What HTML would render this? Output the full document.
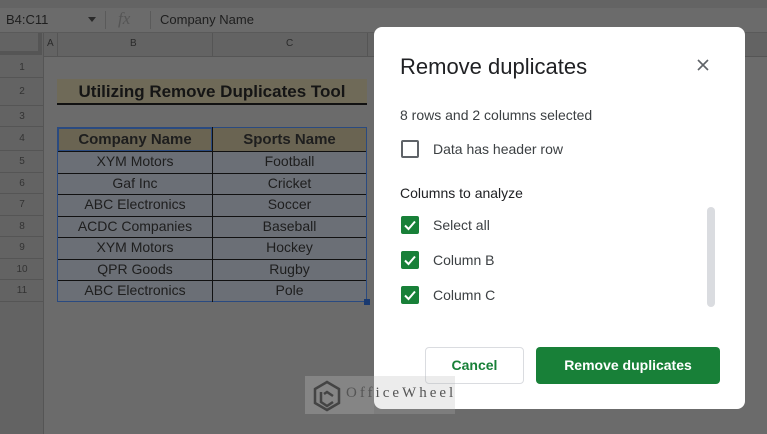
<!DOCTYPE html>
<html><head><style>
*{margin:0;padding:0;box-sizing:border-box}
body{width:767px;height:434px;overflow:hidden;background:#6b6b6b;font-family:"Liberation Sans",Arial,sans-serif;position:relative}
.abs{position:absolute}
.rn{position:absolute;left:0;width:44px;border-bottom:1px solid #555;font-size:10px;color:#333;text-align:center}
.c{position:absolute;text-align:center;font-size:14px;color:#1e1e1e;height:21px;line-height:21px}
.b{left:57px;width:156px}.cc{left:212px;width:155px}
.hl{position:absolute;left:58px;width:308px;height:1px;background:#111}
.cb{position:absolute;left:401px;width:18px;height:18px;background:#188038;border-radius:2px}
.cl{position:absolute;left:433px;font-size:14px;color:#3c4043}
</style></head><body>
<div class="abs" style="left:0;top:0;width:767px;height:8px;background:#646464"></div>
<div class="abs" style="left:0;top:8px;width:767px;height:25px;background:#6b6b6b;border-bottom:1px solid #5a5a5a"></div>
<div class="abs" style="left:6px;top:12px;font-size:13px;color:#1e1e1e">B4:C11</div>
<div class="abs" style="left:88px;top:17px;border:4px solid transparent;border-top:5px solid #2a2a2a"></div>
<div class="abs" style="left:105px;top:11px;width:1px;height:18px;background:#5a5a5a"></div>
<div class="abs" style="left:118px;top:9px;font-size:17px;font-style:italic;color:#555;font-family:'Liberation Serif',serif">fx</div>
<div class="abs" style="left:150px;top:11px;width:1px;height:18px;background:#5a5a5a"></div>
<div class="abs" style="left:160px;top:12px;font-size:13px;color:#1e1e1e">Company Name</div>
<div class="abs" style="left:0;top:33px;width:767px;height:24px;background:#636363;border-bottom:1px solid #555"></div>
<div class="abs" style="left:0;top:33px;width:44px;height:401px;background:#636363;border-right:1px solid #555"></div>
<div class="abs" style="left:0;top:33px;width:42px;height:22px;border-right:4px solid #555;border-bottom:4px solid #555"></div>
<div class="abs" style="left:47px;top:38px;font-size:10px;color:#2a2a2a">A</div>
<div class="abs" style="left:57px;top:33px;width:1px;height:24px;background:#555"></div>
<div class="abs" style="left:130px;top:38px;font-size:10px;color:#2a2a2a">B</div>
<div class="abs" style="left:212px;top:33px;width:1px;height:24px;background:#555"></div>
<div class="abs" style="left:286px;top:38px;font-size:10px;color:#2a2a2a">C</div>
<div class="abs" style="left:367px;top:33px;width:1px;height:24px;background:#555"></div>

<div class="rn" style="top:57px;height:21px;line-height:21px">1</div>
<div class="rn" style="top:78px;height:28px;line-height:28px">2</div>
<div class="rn" style="top:106px;height:21px;line-height:21px">3</div>
<div class="rn" style="top:127px;height:24px;line-height:24px">4</div>
<div class="rn" style="top:151px;height:22px;line-height:22px">5</div>
<div class="rn" style="top:173px;height:21px;line-height:21px">6</div>
<div class="rn" style="top:194px;height:22px;line-height:22px">7</div>
<div class="rn" style="top:216px;height:21px;line-height:21px">8</div>
<div class="rn" style="top:237px;height:22px;line-height:22px">9</div>
<div class="rn" style="top:259px;height:21px;line-height:21px">10</div>
<div class="rn" style="top:280px;height:22px;line-height:22px">11</div>

<div class="abs" style="left:57px;top:79px;width:310px;height:26px;background:#6f6a58;border-bottom:2px solid #111"></div>
<div class="abs" style="left:57px;top:82px;width:310px;text-align:center;font-weight:bold;font-size:17px;color:#151515">Utilizing Remove Duplicates Tool</div>
<div class="abs" style="left:57px;top:127px;width:310px;height:175px;border:1px solid #2a4a80;background:#6b6f76"></div>
<div class="abs" style="left:58px;top:128px;width:308px;height:23px;background:#6a6452"></div>
<div class="abs" style="left:57px;top:127px;width:156px;height:25px;border:2px solid #2a4a80"></div>
<div class="abs" style="left:212px;top:127px;width:1px;height:175px;background:#111"></div>
<div class="hl" style="top:151px"></div><div class="hl" style="top:173px"></div><div class="hl" style="top:194px"></div><div class="hl" style="top:216px"></div><div class="hl" style="top:237px"></div><div class="hl" style="top:259px"></div><div class="hl" style="top:280px"></div>

<div class="c b" style="top:128px;height:23px;line-height:23px;font-weight:bold;font-size:15px">Company Name</div>
<div class="c cc" style="top:128px;height:23px;line-height:23px;font-weight:bold;font-size:15px">Sports Name</div>
<div class="c b" style="top:151px">XYM Motors</div><div class="c cc" style="top:151px">Football</div>
<div class="c b" style="top:173px">Gaf Inc</div><div class="c cc" style="top:173px">Cricket</div>
<div class="c b" style="top:194px">ABC Electronics</div><div class="c cc" style="top:194px">Soccer</div>
<div class="c b" style="top:216px">ACDC Companies</div><div class="c cc" style="top:216px">Baseball</div>
<div class="c b" style="top:237px">XYM Motors</div><div class="c cc" style="top:237px">Hockey</div>
<div class="c b" style="top:259px">QPR Goods</div><div class="c cc" style="top:259px">Rugby</div>
<div class="c b" style="top:280px">ABC Electronics</div><div class="c cc" style="top:280px">Pole</div>
<div class="abs" style="left:364px;top:299px;width:6px;height:6px;background:#1a3a70"></div>

<div class="abs" style="left:374px;top:27px;width:371px;height:382px;background:#fff;border-radius:8px"></div>
<div class="abs" style="left:400px;top:54px;font-size:22px;color:#202124">Remove duplicates</div>
<svg class="abs" style="left:697px;top:59px" width="12" height="12" viewBox="0 0 12 12"><path d="M1 1L11 11M11 1L1 11" stroke="#5f6368" stroke-width="1.6"/></svg>
<div class="abs" style="left:400px;top:107px;font-size:14px;color:#3c4043">8 rows and 2 columns selected</div>
<div class="abs" style="left:401px;top:140px;width:18px;height:18px;border:2px solid #5f6368;border-radius:2px"></div>
<div class="cl" style="top:141px">Data has header row</div>
<div class="abs" style="left:400px;top:185px;font-size:14px;color:#202124">Columns to analyze</div>
<div class="abs" style="left:707px;top:207px;width:8px;height:100px;background:#dadce0;border-radius:4px"></div>
<div class="cb" style="top:216px"><svg width="18" height="18" viewBox="0 0 18 18"><path d="M4 9.5 L7.5 13 L14 5.5" fill="none" stroke="#fff" stroke-width="2"/></svg></div>
<div class="cl" style="top:217px">Select all</div>
<div class="cb" style="top:251px"><svg width="18" height="18" viewBox="0 0 18 18"><path d="M4 9.5 L7.5 13 L14 5.5" fill="none" stroke="#fff" stroke-width="2"/></svg></div>
<div class="cl" style="top:252px">Column B</div>
<div class="cb" style="top:286px"><svg width="18" height="18" viewBox="0 0 18 18"><path d="M4 9.5 L7.5 13 L14 5.5" fill="none" stroke="#fff" stroke-width="2"/></svg></div>
<div class="cl" style="top:287px">Column C</div>
<div class="abs" style="left:425px;top:347px;width:99px;height:37px;border:1px solid #dadce0;border-radius:4px;text-align:center;line-height:35px;font-size:14px;color:#188038;font-weight:bold">Cancel</div>
<div class="abs" style="left:536px;top:347px;width:184px;height:37px;background:#188038;border-radius:4px;text-align:center;line-height:37px;font-size:14px;color:#fff;font-weight:bold">Remove duplicates</div>

<div class="abs" style="left:305px;top:376px;width:69px;height:38px;background:#858585"></div>
<div class="abs" style="left:374px;top:376px;width:81px;height:38px;background:rgba(180,180,180,0.25)"></div>
<svg class="abs" style="left:312px;top:380px" width="30" height="32" viewBox="0 0 30 32"><path d="M15 2 L27 9 V23 L15 30 L3 23 V9 Z M9 12 V22 L15 26 L21 22 M21 16 L15 12 L12 14" fill="none" stroke="#444" stroke-width="2.5"/></svg>
<div class="abs" style="left:346px;top:385px;font-size:15px;letter-spacing:3px;color:#555;font-family:'Liberation Serif',serif">OfficeWheel</div>
</body></html>
